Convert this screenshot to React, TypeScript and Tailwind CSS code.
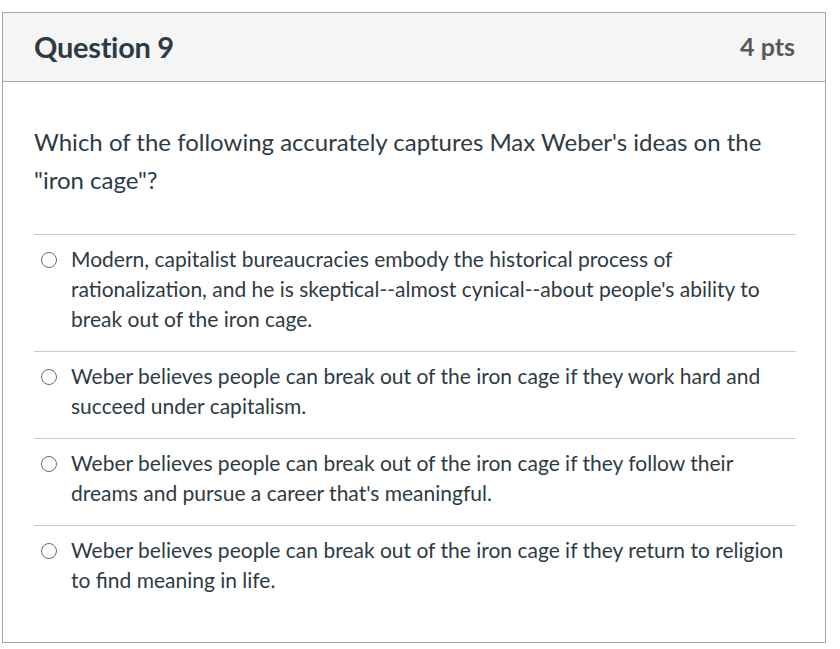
import React from "react";

const answers = [
  "Modern, capitalist bureaucracies embody the historical process of rationalization, and he is skeptical--almost cynical--about people's ability to break out of the iron cage.",
  "Weber believes people can break out of the iron cage if they work hard and succeed under capitalism.",
  "Weber believes people can break out of the iron cage if they follow their dreams and pursue a career that's meaningful.",
  "Weber believes people can break out of the iron cage if they return to religion to find meaning in life.",
];

export default function App() {
  return (
    <div className="w-[840px] h-[649px] bg-white pt-[12px] pl-[2px]" style={{ fontFamily: "Lato, 'Open Sans', sans-serif" }}>
      <div className="w-[824px] h-[631px] border border-[#a3aaa3] flex flex-col">
        <div className="h-[69px] shrink-0 bg-[#f5f5f5] border-b border-[#a3aaa3] flex items-center justify-between pl-[31px] pr-[30px]">
          <h2 className="text-[29px] font-bold text-[#2d3b45] tracking-[-0.3px] -mt-[1px]">Question 9</h2>
          <span className="text-[25px] font-bold text-[#555a5e] -mt-[1px]">4 pts</span>
        </div>
        <div className="pl-[31px] pr-[29px]">
          <p className="pt-[41px] pb-[35px] text-[24px] leading-[38px] text-[#2d3b45] border-b border-[#c7cdd1]">
            Which of the following accurately captures Max Weber's ideas on the "iron cage"?
          </p>
          {answers.map((a, i) => (
            <div
              key={i}
              className={`flex items-start pt-[9px] pb-[17px] ${i < answers.length - 1 ? "border-b border-[#c7cdd1]" : ""}`}
            >
              <span className="mt-[8px] ml-[7px] w-[16px] h-[16px] rounded-full border-[1.5px] border-[#6b6b6b] shrink-0" />
              <span className="ml-[14px] text-[21px] leading-[30px] text-[#2d3b45]">{a}</span>
            </div>
          ))}
        </div>
      </div>
    </div>
  );
}
